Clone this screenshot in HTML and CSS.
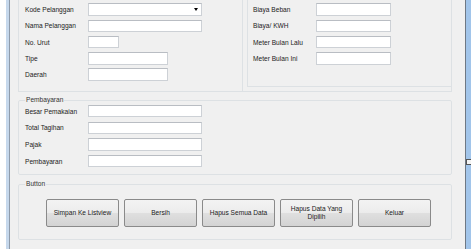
FILE: index.html
```html
<!DOCTYPE html>
<html lang="id">
<head>
  <meta charset="UTF-8" />
  <title>Pembayaran Listrik</title>
  <link rel="stylesheet" href="styles.css">
</head>
<body>
  <div class="screen">
    <div class="window">
      <div class="form">

        <div class="top">
          <div class="pelanggan">
            <div class="fields">
              <label>Kode Pelanggan</label>
              <div class="combo w-lg"><span class="arrow"></span></div>
              <label>Nama Pelanggan</label>
              <input class="txt w-lg" type="text">
              <label>No. Urut</label>
              <input class="txt w-sm" type="text">
              <label>Tipe</label>
              <input class="txt w-md" type="text">
              <label>Daerah</label>
              <input class="txt w-md" type="text">
            </div>
          </div>
          <div class="tarif">
            <div class="fields">
              <label>Biaya Beban</label>
              <input class="txt w-r" type="text">
              <label>Biaya/ KWH</label>
              <input class="txt w-r" type="text">
              <label>Meter Bulan Lalu</label>
              <input class="txt w-r" type="text">
              <label>Meter Bulan Ini</label>
              <input class="txt w-r" type="text">
            </div>
          </div>
        </div>

        <fieldset class="group pembayaran">
          <legend>Pembayaran</legend>
          <div class="fields">
            <label>Besar Pemakaian</label>
            <input class="txt w-lg" type="text">
            <label>Total Tagihan</label>
            <input class="txt w-lg" type="text">
            <label>Pajak</label>
            <input class="txt w-lg" type="text">
            <label>Pembayaran</label>
            <input class="txt w-lg" type="text">
          </div>
        </fieldset>

        <fieldset class="group tombol">
          <legend>Button</legend>
          <div class="buttons">
            <button>Simpan Ke Listview</button>
            <button>Bersih</button>
            <button>Hapus Semua Data</button>
            <button>Hapus Data Yang Dipilih</button>
            <button>Keluar</button>
          </div>
        </fieldset>

      </div>
      <span class="grip"></span>
    </div>
  </div>
</body>
</html>
```

FILE: styles.css
```css
body {
  margin: 0;
  background: #fff;
  font-family: "Liberation Sans", Arial, sans-serif;
  font-size: 6.6px;
  color: #222;
  overflow: hidden;
}
.screen {
  display: flex;
  height: 249px;
  padding: 0 3px 0 6px;
}
.window {
  position: relative;
  flex: 1;
  border-left: 3px solid #c6d8ec;
  border-right: 5px solid #a2c5ea;
  background: #f0f0f0;
}
.form {
  height: 100%;
  box-sizing: border-box;
  border-left: 1px solid #8f9baa;
  border-right: 1px solid #6e7884;
}
.grip {
  position: absolute;
  right: -5px;
  top: 159px;
  width: 4px;
  height: 4px;
  border: 1px solid #555;
  border-right: none;
  background: #f4f4f4;
}

.top {
  display: flex;
  height: 92px;
  box-sizing: border-box;
  margin: 0 13px 0 8px;
  border-left: 1px solid #dde1e4;
  border-right: 1px solid #dde1e4;
  border-bottom: 1px solid #dde1e4;
}
.pelanggan {
  width: 224px;
  padding: 3.3px 0 0 6px;
  box-sizing: border-box;
  border-right: 1px solid #dde1e4;
}
.tarif {
  flex: 1;
  height: 87px;
  box-sizing: border-box;
  margin-left: 4px;
  padding: 3.3px 0 0 5px;
  border-left: 1px solid #dde1e4;
  border-bottom: 1px solid #dde1e4;
}

.fields {
  display: grid;
  grid-template-columns: 63px auto;
  row-gap: 3.9px;
  align-items: center;
  justify-items: start;
}
.txt, .combo {
  box-sizing: border-box;
  height: 12.4px;
  margin: 0;
  padding: 0;
  border: 1px solid #cdd1d6;
  border-top-color: #b9bdc3;
  background: #fff;
}
.combo {
  display: flex;
  align-items: center;
  justify-content: flex-end;
  padding-right: 3px;
}
.arrow {
  width: 0;
  height: 0;
  border-left: 2.5px solid transparent;
  border-right: 2.5px solid transparent;
  border-top: 3px solid #000;
}
.w-lg { width: 114px; }
.w-md { width: 80px; }
.w-sm { width: 31px; }
.w-r { width: 75px; }

.group {
  margin: 0 13px 0 8px;
  min-inline-size: 0;
  border: 1px solid #dde1e4;
  border-radius: 2px;
  padding: 1px 0 0 6px;
}
.group legend {
  padding: 0 1px;
  margin-left: 0;
  line-height: 8px;
  color: #333;
}
.pembayaran {
  margin-top: 4px;
  height: 79px;
  box-sizing: border-box;
  padding-bottom: 8px;
}
.pembayaran .fields {
  row-gap: 4.3px;
}
.tombol {
  margin-top: 5px;
  height: 60px;
  box-sizing: border-box;
  padding-top: 10.7px;
}
.buttons {
  display: flex;
  gap: 5px;
  margin-left: 21px;
}
button {
  width: 73px;
  height: 28px;
  margin: 0;
  padding: 0 6px;
  font-family: inherit;
  font-size: 6.6px;
  line-height: 8px;
  color: #222;
  border: 1px solid #8a8a8a;
  border-radius: 2px;
  background: linear-gradient(#f3f3f3 0%, #ececec 48%, #dfdfdf 52%, #d3d3d3 100%);
}
```
